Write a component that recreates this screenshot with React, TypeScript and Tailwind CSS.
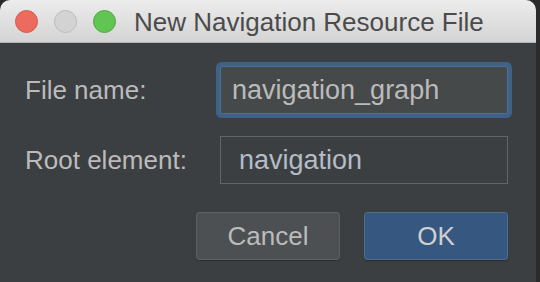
import React from "react";

export default function App() {
  const font = { fontFamily: '"Liberation Sans", Arial, sans-serif' };
  return (
    <div className="w-[540px] h-[282px] bg-[#2b2b2b] flex overflow-hidden" style={font}>
      <div className="w-[536px] h-[282px] flex flex-col rounded-t-[10px] overflow-hidden bg-[#3c3f41]">
        <div className="h-[43px] shrink-0 flex items-center bg-gradient-to-b from-[#ececec] to-[#d4d4d4] border-b border-[#b3b3b3] pl-[15px]">
          <div className="w-[23px] h-[23px] rounded-full bg-[#ed6a5e] border border-[#d35a4f]" />
          <div className="w-[23px] h-[23px] rounded-full bg-[#d3d3d3] border border-[#bcbcbc] ml-[16px]" />
          <div className="w-[23px] h-[23px] rounded-full bg-[#61c554] border border-[#50a845] ml-[16px]" />
          <div className="ml-[18px] text-[26px] leading-none text-[#4b4b4b] mt-[1px]">New Navigation Resource File</div>
        </div>
        <div className="flex flex-col pl-[23px] pt-[23px]">
          <div className="flex items-center h-[48px]">
            <div className="w-[197px] text-[26px] text-[#bbbbbb] leading-none pl-[2px]">File name:</div>
            <div className="w-[288px] h-[48px] rounded-[2px] bg-[#45494a] border border-[#4f6f94] ring-[4px] ring-[#3e6185] flex items-center pl-[11px] text-[27px] text-[#bbbbbb] leading-none">
              navigation_graph
            </div>
          </div>
          <div className="flex items-center h-[48px] mt-[22px]">
            <div className="w-[197px] text-[26px] text-[#bbbbbb] leading-none pl-[2px]">Root element:</div>
            <div className="w-[288px] h-[48px] bg-[#3c3f41] border border-[#646464] flex items-center pl-[18px] text-[27px] text-[#b5bcc6] leading-none">
              navigation
            </div>
          </div>
          <div className="flex justify-end gap-[24px] mt-[28px] pr-[28px]">
            <div className="w-[144px] h-[48px] rounded-[3px] bg-[#4c5052] border border-[#5e6163] flex items-center justify-center text-[26px] text-[#bbbbbb] leading-none shadow-[0_1px_1px_rgba(0,0,0,0.3)]">
              Cancel
            </div>
            <div className="w-[144px] h-[48px] rounded-[3px] bg-[#365880] border border-[#4c708c] flex items-center justify-center text-[26px] text-[#d0d0d0] leading-none shadow-[0_1px_1px_rgba(0,0,0,0.3)]">
              OK
            </div>
          </div>
        </div>
      </div>
    </div>
  );
}
